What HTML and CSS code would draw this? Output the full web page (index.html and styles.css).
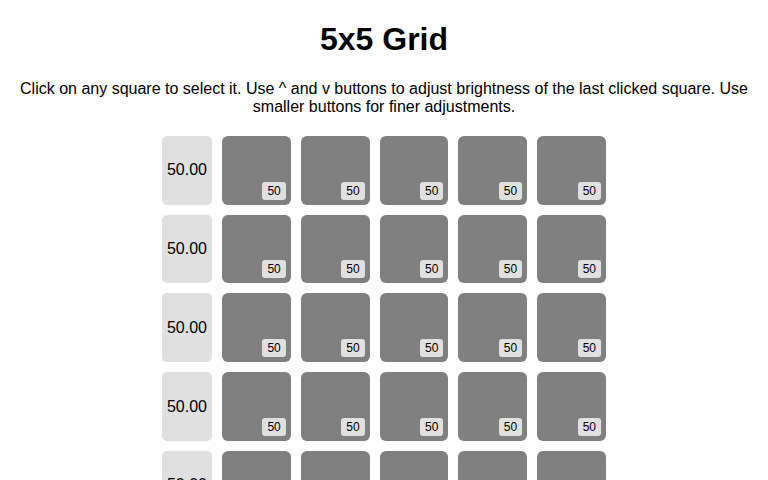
FILE: index.html
```html
<!DOCTYPE html>
<html>
<head>
<meta charset="utf-8">
<title>5x5 Grid</title>
<link rel="stylesheet" href="styles.css">
</head>
<body>
<h1 class="title">5x5 Grid</h1>
<p class="intro">Click on any square to select it. Use ^ and v buttons to adjust brightness of the last clicked square. Use smaller buttons for finer adjustments.</p>
<div class="grid">
  <div class="label">50.00</div>
  <div class="sq"><span class="badge">50</span></div>
  <div class="sq"><span class="badge">50</span></div>
  <div class="sq"><span class="badge">50</span></div>
  <div class="sq"><span class="badge">50</span></div>
  <div class="sq"><span class="badge">50</span></div>

  <div class="label">50.00</div>
  <div class="sq"><span class="badge">50</span></div>
  <div class="sq"><span class="badge">50</span></div>
  <div class="sq"><span class="badge">50</span></div>
  <div class="sq"><span class="badge">50</span></div>
  <div class="sq"><span class="badge">50</span></div>

  <div class="label">50.00</div>
  <div class="sq"><span class="badge">50</span></div>
  <div class="sq"><span class="badge">50</span></div>
  <div class="sq"><span class="badge">50</span></div>
  <div class="sq"><span class="badge">50</span></div>
  <div class="sq"><span class="badge">50</span></div>

  <div class="label">50.00</div>
  <div class="sq"><span class="badge">50</span></div>
  <div class="sq"><span class="badge">50</span></div>
  <div class="sq"><span class="badge">50</span></div>
  <div class="sq"><span class="badge">50</span></div>
  <div class="sq"><span class="badge">50</span></div>

  <div class="label">50.00</div>
  <div class="sq"><span class="badge">50</span></div>
  <div class="sq"><span class="badge">50</span></div>
  <div class="sq"><span class="badge">50</span></div>
  <div class="sq"><span class="badge">50</span></div>
  <div class="sq"><span class="badge">50</span></div>
</div>
</body>
</html>
```
FILE: styles.css
```css
body {
  margin: 8px;
  font-family: "Liberation Sans", Arial, sans-serif;
  color: #000;
  background: #fff;
  text-align: center;
}
.title {
  font-size: 32px;
  font-weight: bold;
  margin: 13.44px 0 21.44px;
}
.intro {
  font-size: 16px;
  margin: 16px 0 20px;
}
.grid {
  display: grid;
  grid-template-columns: 50px repeat(5, 68.8px);
  grid-auto-rows: 68.8px;
  gap: 10px;
  justify-content: center;
}
.label {
  background: #e0e0e0;
  border-radius: 5px;
  display: flex;
  align-items: center;
  justify-content: center;
  font-size: 16px;
}
.sq {
  background: #808080;
  border-radius: 6px;
  position: relative;
}
.badge {
  position: absolute;
  right: 5px;
  bottom: 5px;
  background: #e0e0e0;
  border-radius: 3px;
  font-size: 12px;
  line-height: 14px;
  padding: 2px 5px;
}
```
